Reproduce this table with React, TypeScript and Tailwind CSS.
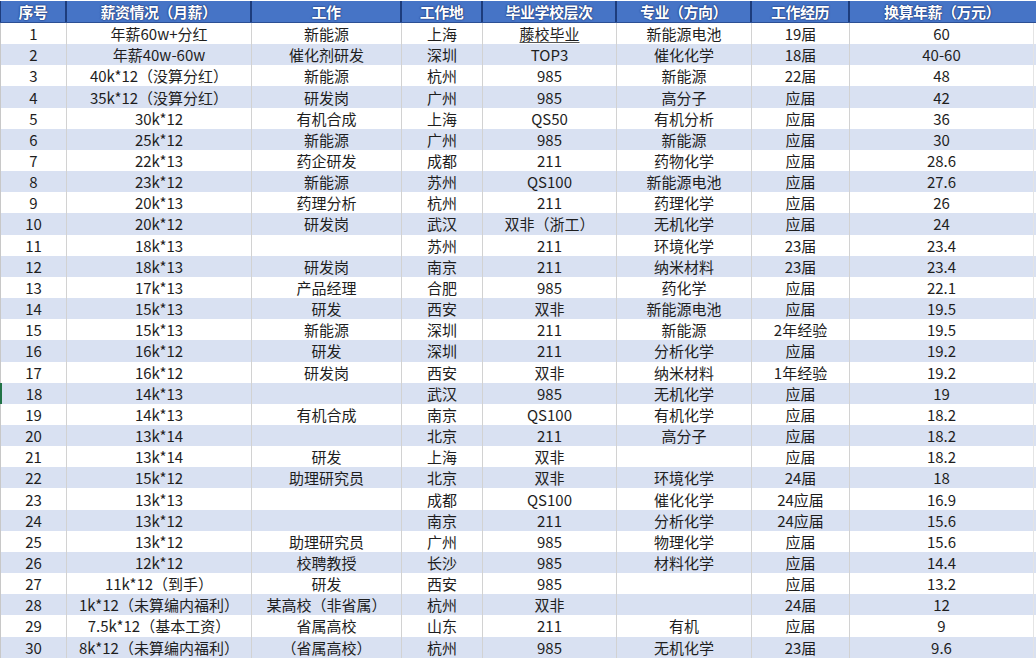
const headers = ["序号", "薪资情况（月薪）", "工作", "工作地", "毕业学校层次", "专业（方向）", "工作经历", "换算年薪（万元）"];

const rows: string[][] = [
  ["1", "年薪60w+分红", "新能源", "上海", "藤校毕业", "新能源电池", "19届", "60"],
  ["2", "年薪40w-60w", "催化剂研发", "深圳", "TOP3", "催化化学", "18届", "40-60"],
  ["3", "40k*12（没算分红）", "新能源", "杭州", "985", "新能源", "22届", "48"],
  ["4", "35k*12（没算分红）", "研发岗", "广州", "985", "高分子", "应届", "42"],
  ["5", "30k*12", "有机合成", "上海", "QS50", "有机分析", "应届", "36"],
  ["6", "25k*12", "新能源", "广州", "985", "新能源", "应届", "30"],
  ["7", "22k*13", "药企研发", "成都", "211", "药物化学", "应届", "28.6"],
  ["8", "23k*12", "新能源", "苏州", "QS100", "新能源电池", "应届", "27.6"],
  ["9", "20k*13", "药理分析", "杭州", "211", "药理化学", "应届", "26"],
  ["10", "20k*12", "研发岗", "武汉", "双非（浙工）", "无机化学", "应届", "24"],
  ["11", "18k*13", "", "苏州", "211", "环境化学", "23届", "23.4"],
  ["12", "18k*13", "研发岗", "南京", "211", "纳米材料", "23届", "23.4"],
  ["13", "17k*13", "产品经理", "合肥", "985", "药化学", "应届", "22.1"],
  ["14", "15k*13", "研发", "西安", "双非", "新能源电池", "应届", "19.5"],
  ["15", "15k*13", "新能源", "深圳", "211", "新能源", "2年经验", "19.5"],
  ["16", "16k*12", "研发", "深圳", "211", "分析化学", "应届", "19.2"],
  ["17", "16k*12", "研发岗", "西安", "双非", "纳米材料", "1年经验", "19.2"],
  ["18", "14k*13", "", "武汉", "985", "无机化学", "应届", "19"],
  ["19", "14k*13", "有机合成", "南京", "QS100", "有机化学", "应届", "18.2"],
  ["20", "13k*14", "", "北京", "211", "高分子", "应届", "18.2"],
  ["21", "13k*14", "研发", "上海", "双非", "", "应届", "18.2"],
  ["22", "15k*12", "助理研究员", "北京", "双非", "环境化学", "24届", "18"],
  ["23", "13k*13", "", "成都", "QS100", "催化化学", "24应届", "16.9"],
  ["24", "13k*12", "", "南京", "211", "分析化学", "24应届", "15.6"],
  ["25", "13k*12", "助理研究员", "广州", "985", "物理化学", "应届", "15.6"],
  ["26", "12k*12", "校聘教授", "长沙", "985", "材料化学", "应届", "14.4"],
  ["27", "11k*12（到手）", "研发", "西安", "985", "", "应届", "13.2"],
  ["28", "1k*12（未算编内福利）", "某高校（非省属）", "杭州", "双非", "", "24届", "12"],
  ["29", "7.5k*12（基本工资）", "省属高校", "山东", "211", "有机", "应届", "9"],
  ["30", "8k*12（未算编内福利）", "（省属高校）", "杭州", "985", "无机化学", "23届", "9.6"],
];

const cols = "grid grid-cols-[67px_185px_150px_81px_134px_135px_98px_184px]";

export default function App() {
  return (
    <div className="w-[1036px] h-[662px] bg-white overflow-hidden pt-px font-['Noto_Sans_CJK_SC',sans-serif] text-[15px] text-[#1e1e1e]">
      {/* header */}
      <div className={`${cols} h-[22px] bg-[#4674c6] border-b border-[#2c4f94]`}>
        {headers.map((h, i) => (
          <div
            key={h}
            className={`flex items-center justify-center leading-none font-bold text-white tracking-[-0.5px] [text-shadow:0_0_2px_#163070,0_0_1px_#163070] ${
              i < headers.length - 1 ? "border-r-2 border-[#1d3c7c]" : ""
            } ${i === 0 ? "border-l border-[#1d3c7c]" : ""}`}
          >
            {h}
          </div>
        ))}
      </div>

      {/* body */}
      {rows.map((r, ri) => (
        <div key={r[0]} className={`${cols} h-[21.17px] ${ri % 2 === 1 ? "bg-[#d9e1f2]" : "bg-white"}`}>
          {r.map((c, ci) => (
            <div
              key={ci}
              className={`flex items-center justify-center leading-none whitespace-nowrap ${
                ci < r.length - 1 ? "border-r border-[#d2d2d2]" : "border-r border-[#e4e4e4]"
              } ${ci === 0 ? (r[0] === "18" ? "border-l-2 border-l-[#217346]" : "border-l border-l-[#c8c8c8]") : ""} ${
                ri === 0 && ci === 4 ? "underline underline-offset-2 decoration-[#555]" : ""
              }`}
            >
              {c}
            </div>
          ))}
        </div>
      ))}
    </div>
  );
}
